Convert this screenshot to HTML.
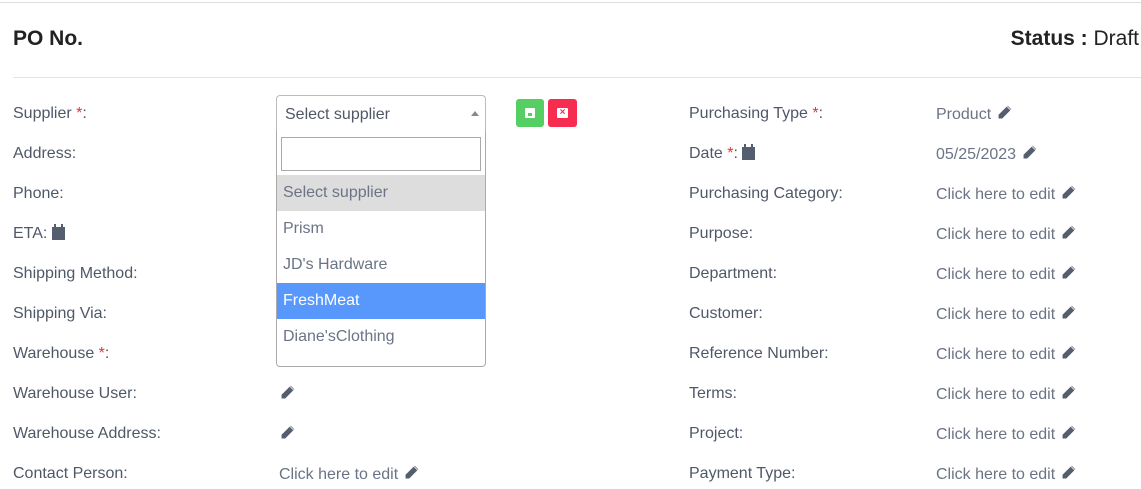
<!DOCTYPE html>
<html><head><meta charset="utf-8"><style>
body{margin:0;width:1141px;height:489px;background:#fff;font-family:"Liberation Sans",sans-serif;position:relative;overflow:hidden;color:#4f5867}
.a{position:absolute;white-space:nowrap}
.l,.v{line-height:20px;height:20px}
.l{font-size:16px;color:#4f5867}
.v{font-size:16px;color:#6b7485}
.r{color:#e3342f}
svg{vertical-align:-2px}
.opt{position:absolute;left:0;width:208px;height:36px;line-height:36px;padding-left:6px;box-sizing:border-box;font-size:16px;color:#6b7485}
</style></head><body>
<div class="a" style="left:0;top:2px;width:1141px;height:1px;background:#ddd"></div>
<div class="a" style="left:13px;top:27px;font-size:21px;font-weight:bold;color:#222">PO No.</div>
<div class="a" style="right:2px;top:27px;font-size:21px;color:#222"><b>Status :</b> Draft</div>
<div class="a" style="left:13px;top:77px;width:1128px;height:1px;background:#e3e3e3"></div>

<div class="a l" style="left:13px;top:104px">Supplier <span class="r">*</span>:</div>
<div class="a l" style="left:13px;top:144px">Address:</div>
<div class="a l" style="left:13px;top:184px">Phone:</div>
<div class="a l" style="left:13px;top:224px">ETA: <svg width="13" height="16" viewBox="0 0 13 16"><rect x="0" y="3" width="13" height="13" fill="#555e6e"/><rect x="2" y="0" width="2" height="4" fill="#555e6e"/><rect x="9" y="0" width="2" height="4" fill="#555e6e"/></svg></div>
<div class="a l" style="left:13px;top:264px">Shipping Method:</div>
<div class="a l" style="left:13px;top:304px">Shipping Via:</div>
<div class="a l" style="left:13px;top:344px">Warehouse <span class="r">*</span>:</div>
<div class="a l" style="left:13px;top:384px">Warehouse User:</div>
<div class="a l" style="left:13px;top:424px">Warehouse Address:</div>
<div class="a l" style="left:13px;top:464px">Contact Person:</div>

<div class="a v" style="left:279px;top:384px"><svg width="17" height="17" viewBox="0 0 16 16"><path d="M11 1l4 4-9 9H2v-4z M10 2l4 4" fill="#555e6e" stroke="#fff" stroke-width=".8"/></svg></div>
<div class="a v" style="left:279px;top:424px"><svg width="17" height="17" viewBox="0 0 16 16"><path d="M11 1l4 4-9 9H2v-4z M10 2l4 4" fill="#555e6e" stroke="#fff" stroke-width=".8"/></svg></div>
<div class="a v" style="left:279px;top:464px">Click here to edit <svg width="17" height="17" viewBox="0 0 16 16"><path d="M11 1l4 4-9 9H2v-4z M10 2l4 4" fill="#555e6e" stroke="#fff" stroke-width=".8"/></svg></div>

<div class="a l" style="left:689px;top:104px">Purchasing Type <span class="r">*</span>:</div>
<div class="a l" style="left:689px;top:144px">Date <span class="r">*</span>: <svg width="13" height="16" viewBox="0 0 13 16"><rect x="0" y="3" width="13" height="13" fill="#555e6e"/><rect x="2" y="0" width="2" height="4" fill="#555e6e"/><rect x="9" y="0" width="2" height="4" fill="#555e6e"/></svg></div>
<div class="a l" style="left:689px;top:184px">Purchasing Category:</div>
<div class="a l" style="left:689px;top:224px">Purpose:</div>
<div class="a l" style="left:689px;top:264px">Department:</div>
<div class="a l" style="left:689px;top:304px">Customer:</div>
<div class="a l" style="left:689px;top:344px">Reference Number:</div>
<div class="a l" style="left:689px;top:384px">Terms:</div>
<div class="a l" style="left:689px;top:424px">Project:</div>
<div class="a l" style="left:689px;top:464px">Payment Type:</div>

<div class="a v" style="left:936px;top:104px">Product <svg width="17" height="17" viewBox="0 0 16 16"><path d="M11 1l4 4-9 9H2v-4z M10 2l4 4" fill="#555e6e" stroke="#fff" stroke-width=".8"/></svg></div>
<div class="a v" style="left:936px;top:144px">05/25/2023 <svg width="17" height="17" viewBox="0 0 16 16"><path d="M11 1l4 4-9 9H2v-4z M10 2l4 4" fill="#555e6e" stroke="#fff" stroke-width=".8"/></svg></div>
<div class="a v" style="left:936px;top:184px">Click here to edit <svg width="17" height="17" viewBox="0 0 16 16"><path d="M11 1l4 4-9 9H2v-4z M10 2l4 4" fill="#555e6e" stroke="#fff" stroke-width=".8"/></svg></div>
<div class="a v" style="left:936px;top:224px">Click here to edit <svg width="17" height="17" viewBox="0 0 16 16"><path d="M11 1l4 4-9 9H2v-4z M10 2l4 4" fill="#555e6e" stroke="#fff" stroke-width=".8"/></svg></div>
<div class="a v" style="left:936px;top:264px">Click here to edit <svg width="17" height="17" viewBox="0 0 16 16"><path d="M11 1l4 4-9 9H2v-4z M10 2l4 4" fill="#555e6e" stroke="#fff" stroke-width=".8"/></svg></div>
<div class="a v" style="left:936px;top:304px">Click here to edit <svg width="17" height="17" viewBox="0 0 16 16"><path d="M11 1l4 4-9 9H2v-4z M10 2l4 4" fill="#555e6e" stroke="#fff" stroke-width=".8"/></svg></div>
<div class="a v" style="left:936px;top:344px">Click here to edit <svg width="17" height="17" viewBox="0 0 16 16"><path d="M11 1l4 4-9 9H2v-4z M10 2l4 4" fill="#555e6e" stroke="#fff" stroke-width=".8"/></svg></div>
<div class="a v" style="left:936px;top:384px">Click here to edit <svg width="17" height="17" viewBox="0 0 16 16"><path d="M11 1l4 4-9 9H2v-4z M10 2l4 4" fill="#555e6e" stroke="#fff" stroke-width=".8"/></svg></div>
<div class="a v" style="left:936px;top:424px">Click here to edit <svg width="17" height="17" viewBox="0 0 16 16"><path d="M11 1l4 4-9 9H2v-4z M10 2l4 4" fill="#555e6e" stroke="#fff" stroke-width=".8"/></svg></div>
<div class="a v" style="left:936px;top:464px">Click here to edit <svg width="17" height="17" viewBox="0 0 16 16"><path d="M11 1l4 4-9 9H2v-4z M10 2l4 4" fill="#555e6e" stroke="#fff" stroke-width=".8"/></svg></div>

<div class="a" style="left:276px;top:95px;width:208px;height:36px;border:1px solid #bbb;border-bottom:none;border-radius:4px 4px 0 0;background:#fff">
 <div class="a" style="left:8px;top:10px;font-size:16px;color:#4f5867">Select supplier</div>
 <div class="a" style="left:194px;top:15px;width:0;height:0;border-left:4px solid transparent;border-right:4px solid transparent;border-bottom:5px solid #888"></div>
</div>
<div class="a" style="left:276px;top:131px;width:208px;height:235px;border:1px solid #aaa;border-top:none;border-radius:0 0 4px 4px;background:#fff">
 <div class="a" style="left:4px;top:6px;width:198px;height:32px;border:1px solid #aaa"></div>
 <div class="opt" style="top:44px;background:#ddd">Select supplier</div>
 <div class="opt" style="top:80px">Prism</div>
 <div class="opt" style="top:116px">JD's Hardware</div>
 <div class="opt" style="top:152px;background:#5897fb;color:#fff">FreshMeat</div>
 <div class="opt" style="top:188px">Diane'sClothing</div>
</div>

<div class="a" style="left:516px;top:99px;width:28px;height:28px;background:#55ce63;border-radius:3px"><div class="a" style="left:9px;top:9px;width:10px;height:10px;background:#fff;border-radius:1px"><div class="a" style="left:3px;top:5px;width:4px;height:3px;background:#55ce63"></div></div></div>
<div class="a" style="left:548px;top:99px;width:29px;height:28px;background:#f62d51;border-radius:3px"><div class="a" style="left:9px;top:9px;width:11px;height:10px;background:#fff;border-radius:1px;color:#f62d51;font-size:10px;font-weight:bold;line-height:10px;text-align:center">×</div></div>
</body></html>
